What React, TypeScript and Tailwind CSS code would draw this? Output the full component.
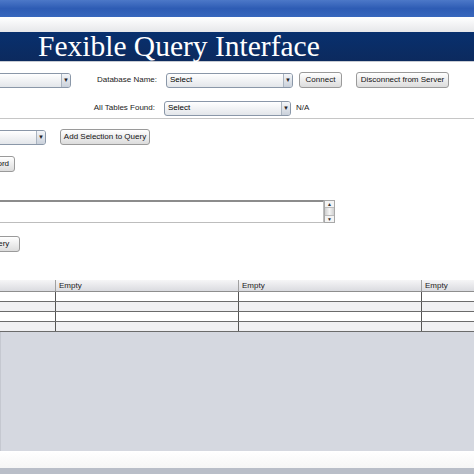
import React from 'react';

const font = { fontFamily: '"Liberation Sans", Arial, sans-serif' };

function Combo({ w, ml = 0, text = '' }: { w: number; ml?: number; text?: string }) {
  return (
    <div
      className="h-[15px] flex items-stretch border border-[#8a97a8] rounded-[3px] bg-gradient-to-b from-white to-[#e3e6ea] overflow-hidden shrink-0"
      style={{ width: w, marginLeft: ml }}
    >
      <div className="flex-1 flex items-center pl-[3px] text-[8px] text-black">{text}</div>
      <div className="w-[9px] flex items-center justify-center bg-gradient-to-b from-[#f4f6f9] to-[#c9d0da] border-l border-[#aab4c0] text-[6px] text-[#222]">
        ▼
      </div>
    </div>
  );
}

function Btn({ children, w, ml = 0 }: { children?: React.ReactNode; w: number; ml?: number }) {
  return (
    <div
      className="h-[16px] flex items-center justify-center border border-[#9a9a9a] rounded-[3px] bg-gradient-to-b from-white to-[#dcdcdc] text-[8px] text-[#111] shrink-0 whitespace-nowrap overflow-hidden"
      style={{ width: w, marginLeft: ml }}
    >
      {children}
    </div>
  );
}

export default function App() {
  const rows = [0, 1, 2, 3];
  return (
    <div className="w-[474px] h-[474px] overflow-hidden bg-white flex flex-col" style={font}>
      {/* top strip */}
      <div className="h-[17px] bg-gradient-to-b from-[#4c78c8] via-[#2e5cb4] to-[#3867bd] shrink-0" />
      <div className="h-[15px] bg-gradient-to-b from-white to-[#e6e7ea] shrink-0" />
      {/* banner */}
      <div className="h-[30px] bg-gradient-to-b from-[#08306e] to-[#0c2a5e] flex items-center pl-[38px] shrink-0 border-b border-[#c8ccd4]">
        <span
          className="text-white text-[29.5px] leading-none"
          style={{ fontFamily: '"Liberation Serif", "Times New Roman", serif' }}
        >
          Fexible Query Interface
        </span>
      </div>

      {/* row 1 */}
      <div className="flex items-center mt-[10px] h-[16px] shrink-0">
        <Combo w={120} ml={-49} />
        <span className="w-[86px] text-right text-[8px] text-[#222] shrink-0">Database Name:</span>
        <Combo w={127} ml={9} text="Select" />
        <Btn w={43} ml={6}>Connect</Btn>
        <Btn w={93} ml={14}>Disconnect from Server</Btn>
      </div>

      {/* row 2 */}
      <div className="flex items-center mt-[12px] h-[16px] shrink-0">
        <span className="w-[155px] text-right text-[8px] text-[#222] shrink-0">All Tables Found:</span>
        <Combo w={127} ml={9} text="Select" />
        <span className="ml-[5px] text-[8px] text-[#222]">N/A</span>
      </div>

      <div className="mt-[2px] h-px bg-[#c6c6c6] shrink-0" />

      {/* row 3 */}
      <div className="flex items-center mt-[10px] h-[16px] shrink-0">
        <Combo w={100} ml={-54} />
        <Btn w={90} ml={14}>Add Selection to Query</Btn>
      </div>

      {/* row 4 */}
      <div className="flex items-center mt-[11px] h-[16px] shrink-0">
        <Btn w={60} ml={-45}>Show Record</Btn>
      </div>

      {/* text area */}
      <div className="flex mt-[28px] h-[23px] shrink-0">
        <div className="w-[324px] border-t-2 border-b border-r border-t-[#8c8c8c] border-b-[#bdbdbd] border-r-[#bdbdbd] bg-white" />
        <div className="w-[11px] flex flex-col border border-[#a8a8a8] bg-[#e4e4e4]">
          <div className="h-[6px] flex items-center justify-center text-[5px] leading-none text-[#333] bg-[#f4f4f4]">▲</div>
          <div className="flex-1 bg-gradient-to-r from-[#d0d0d0] via-[#f4f4f4] to-[#d0d0d0] border-y border-[#bbb]" />
          <div className="h-[6px] flex items-center justify-center text-[5px] leading-none text-[#333] bg-[#f4f4f4]">▼</div>
        </div>
      </div>

      {/* run query */}
      <div className="flex items-center mt-[13px] h-[16px] shrink-0">
        <Btn w={60} ml={-40}>Run Query</Btn>
      </div>

      {/* table */}
      <div className="mt-[28px] shrink-0 flex flex-col">
        <div className="flex h-[12px] bg-gradient-to-b from-[#f6f6f7] to-[#dadbe0] border-b border-[#8e8e8e] text-[8px] text-[#222]">
          <div className="w-[56px] border-r border-[#a0a0a0]" />
          <div className="w-[183px] border-r border-[#a0a0a0] pl-[3px] flex items-center">Empty</div>
          <div className="w-[183px] border-r border-[#a0a0a0] pl-[3px] flex items-center">Empty</div>
          <div className="flex-1 pl-[3px] flex items-center">Empty</div>
        </div>
        {rows.map((r) => (
          <div
            key={r}
            className={`flex h-[10px] border-b border-[#6b6b6b] ${r % 2 === 0 ? 'bg-white' : 'bg-[#f0f0f2]'}`}
          >
            <div className="w-[56px] border-r border-[#555]" />
            <div className="w-[183px] border-r border-[#555]" />
            <div className="w-[183px] border-r border-[#555]" />
            <div className="flex-1" />
          </div>
        ))}
      </div>

      {/* gray empty area */}
      <div className="h-[119px] bg-[#d5d8e0] border-l border-[#c5c8d0] shrink-0" />
      <div className="h-[17px] bg-gradient-to-b from-white to-[#f6f6f6] shrink-0" />
      <div className="flex-1 bg-[#b9bec8]" />
    </div>
  );
}
